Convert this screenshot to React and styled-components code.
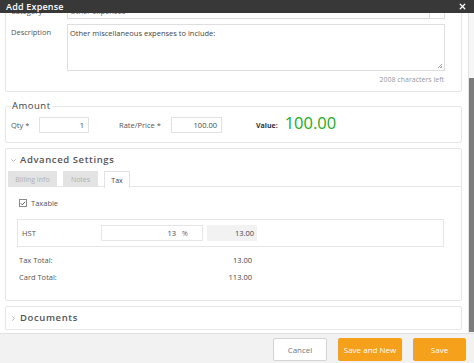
import React from 'react';
import styled, { createGlobalStyle } from 'styled-components';
import { ChevronDown, ChevronRight, X, Check } from 'lucide-react';

const GlobalStyle = createGlobalStyle`
  html, body { margin: 0; padding: 0; background: #fff; }
  body { font-family: "Open Sans", "Noto Sans", sans-serif; color: #555; }
  * { box-sizing: border-box; }
`;

const Modal = styled.div`
  width: 474px;
  height: 363px;
  display: flex;
  flex-direction: column;
  overflow: hidden;
  background: #fff;
`;

const Header = styled.div`
  height: 13px;
  flex: none;
  background: #383838;
  color: #fff;
  display: flex;
  align-items: center;
  justify-content: space-between;
  padding: 0 7px 0 6px;
  position: relative;
  z-index: 1;
`;

const Title = styled.span`
  font-size: 9px;
  font-weight: 600;
  letter-spacing: 0.2px;
  line-height: 13px;
`;

const Body = styled.div`
  flex: 1;
  display: flex;
  min-height: 0;
  overflow: hidden;
`;

const Scroller = styled.div`
  flex: 1;
  overflow: hidden;
`;

const Content = styled.div`
  margin-top: -16px;
  padding: 0 6px 0 5px;
  display: flex;
  flex-direction: column;
  gap: 5px;
`;

const ScrollTrack = styled.div`
  width: 6px;
  flex: none;
  background: #f6f6f6;
  border-left: 1px solid #e4e4e4;
  padding-top: 65px;
`;

const Thumb = styled.div`
  height: 254px;
  background: #7d7d7d;
`;

const Card = styled.div`
  border: 1px solid #e6e6e6;
  border-radius: 2px;
  padding: ${(p) => p.$pad || '0'};
  margin-top: ${(p) => p.$mt || '0'};
`;

const FormRow = styled.div`
  display: flex;
  align-items: ${(p) => p.$align || 'center'};
  margin-top: ${(p) => p.$mt || '0'};
`;

const Label = styled.span`
  font-size: 7.5px;
  color: #555;
  width: ${(p) => p.$w || 'auto'};
  flex: none;
  line-height: 12px;
  padding-top: ${(p) => p.$pt || '0'};
`;

const Select = styled.div`
  flex: 1;
  height: 16px;
  border: 1px solid #dedede;
  display: flex;
  align-items: center;
  font-size: 7.5px;
  color: #666;
  padding-left: 2px;
  & > span:first-child { flex: 1; }
`;

const SelectArrow = styled.span`
  width: 15px;
  height: 100%;
  border-left: 1px solid #dedede;
`;

const TextArea = styled.div`
  flex: 1;
  height: 47px;
  border: 1px solid #dedede;
  font-size: 7.5px;
  color: #444;
  padding: 3px 2px;
  position: relative;
`;

const Grip = styled.span`
  position: absolute;
  right: 2px;
  bottom: 2px;
  width: 4px;
  height: 4px;
  background: linear-gradient(135deg, transparent 45%, #aaa 45%, #aaa 60%, transparent 60%, transparent 75%, #aaa 75%);
`;

const Counter = styled.div`
  text-align: right;
  font-size: 7px;
  color: #999;
  line-height: 10px;
  margin-top: 4px;
  padding-right: 1px;
`;

const Fieldset = styled.fieldset`
  margin: 3px 0 0;
  border: 1px solid #e6e6e6;
  border-radius: 2px;
  padding: 0 4px 7px 5px;
`;

const Legend = styled.legend`
  font-size: 9.5px;
  letter-spacing: 0.5px;
  color: #444;
  line-height: 12px;
  padding: 0 1px;
`;

const Input = styled.div`
  width: ${(p) => p.$w};
  height: 16px;
  border: 1px solid #e2e2e2;
  font-size: 7.5px;
  color: #444;
  display: flex;
  align-items: center;
  justify-content: flex-end;
  padding-right: 4px;
  flex: none;
`;

const ValueLabel = styled.span`
  font-size: 7px;
  font-weight: 700;
  color: #333;
  margin-left: 34px;
  margin-right: 7px;
`;

const BigValue = styled.span`
  font-family: "Open Sans", sans-serif;
  font-size: 16.5px;
  color: #22aa22;
  line-height: 16px;
  margin-bottom: 4px;
`;

const SectionTitle = styled.div`
  display: flex;
  align-items: center;
  gap: 3px;
  font-size: 9.5px;
  font-weight: 600;
  letter-spacing: 0.6px;
  color: #555;
  line-height: 12px;
  margin-left: ${(p) => p.$ml || '0'};
  svg { color: #777; }
`;

const Tabs = styled.div`
  display: flex;
  gap: 6px;
  margin-top: 5px;
  margin-right: -9px;
  border-bottom: 1px solid #e6e6e6;
  height: 16px;
`;

const Tab = styled.div`
  height: ${(p) => (p.$active ? '17px' : '16px')};
  width: ${(p) => p.$w};
  font-size: 7px;
  display: flex;
  align-items: center;
  justify-content: center;
  background: ${(p) => (p.$active ? '#fff' : '#e3e3e3')};
  color: ${(p) => (p.$active ? '#444' : '#b0b0b0')};
  border: ${(p) => (p.$active ? '1px solid #e2e2e2' : 'none')};
  border-bottom: none;
  border-radius: 1px 1px 0 0;
`;

const Panel = styled.div`
  padding: 0 0 17px 11px;
`;

const CheckRow = styled.label`
  display: flex;
  align-items: center;
  gap: 4px;
  margin-top: 12px;
  font-size: 7.5px;
  color: #555;
  line-height: 8px;
`;

const CheckBox = styled.span`
  width: 8px;
  height: 8px;
  border: 1px solid #8a8a8a;
  display: flex;
  align-items: center;
  justify-content: center;
  color: #222;
`;

const TaxBox = styled.div`
  margin: 12px 0 0 -2px;
  width: 427px;
  height: 28px;
  border: 1px solid #e6e6e6;
  padding: 0 4px;
  display: flex;
  align-items: center;
`;

const InputGroup = styled.div`
  width: 102px;
  height: 16px;
  border: 1px solid #e6e6e6;
  display: flex;
  align-items: center;
  font-size: 7.5px;
  color: #444;
`;

const GroupValue = styled.span`
  width: 74px;
  text-align: right;
`;

const Addon = styled.span`
  margin-left: 6px;
  font-size: 7px;
  color: #666;
`;

const ReadOnly = styled.div`
  width: 50px;
  height: 16px;
  margin-left: 4px;
  background: #f2f2f2;
  font-size: 7.5px;
  color: #444;
  display: flex;
  align-items: center;
  justify-content: flex-end;
  padding-right: 3px;
`;

const TotalRow = styled.div`
  display: flex;
  font-size: 7.5px;
  color: #555;
  line-height: 12px;
  margin-top: ${(p) => p.$mt};
`;

const TotalLabel = styled.span`
  width: 180px;
`;

const TotalValue = styled.span`
  width: 53px;
  text-align: right;
  color: #444;
`;

const Footer = styled.div`
  height: 30px;
  flex: none;
  background: #f2f2f2;
  border-top: 1px solid #e2e2e2;
  display: flex;
  align-items: center;
  justify-content: flex-end;
  gap: 11px;
  padding: 0 8px 0 0;
`;

const Button = styled.button`
  width: ${(p) => p.$w};
  height: 23px;
  border-radius: 2px;
  font-family: "Open Sans", sans-serif;
  font-size: 8px;
  padding: 0;
  border: 1px solid ${(p) => (p.$primary ? '#f5a11c' : '#d4d4d4')};
  background: ${(p) => (p.$primary ? '#f5a11c' : '#fff')};
  color: ${(p) => (p.$primary ? '#fff' : '#777')};
  margin-top: 2px;
`;

export default function App() {
  return (
    <>
      <GlobalStyle />
      <Modal>
        <Header>
          <Title>Add Expense</Title>
          <X size={9} strokeWidth={3.5} color="#fff" />
        </Header>
        <Body>
          <Scroller>
            <Content>
              <Card $pad="5px 16px 6px 5px">
                <FormRow>
                  <Label $w="56px">Category</Label>
                  <Select>
                    <span>Other expenses</span>
                    <SelectArrow />
                  </Select>
                </FormRow>
                <FormRow $align="flex-start" $mt="5px">
                  <Label $w="56px" $pt="2px">Description</Label>
                  <TextArea>
                    Other miscellaneous expenses to include:
                    <Grip />
                  </TextArea>
                </FormRow>
                <Counter>2008 characters left</Counter>
              </Card>

              <Fieldset>
                <Legend>Amount</Legend>
                <FormRow $mt="3px">
                  <Label $w="28px">Qty *</Label>
                  <Input $w="50px">1</Input>
                  <Label $w="52px" style={{ marginLeft: 30 }}>Rate/Price *</Label>
                  <Input $w="51px">100.00</Input>
                  <ValueLabel>Value:</ValueLabel>
                  <BigValue>100.00</BigValue>
                </FormRow>
              </Fieldset>

              <Card $pad="5px 8px 0 2px">
                <SectionTitle $ml="2px">
                  <ChevronDown size={7} strokeWidth={2} />
                  Advanced Settings
                </SectionTitle>
                <Tabs>
                  <Tab $w="49px">Billing Info</Tab>
                  <Tab $w="35px">Notes</Tab>
                  <Tab $w="26px" $active>Tax</Tab>
                </Tabs>
                <Panel>
                  <CheckRow>
                    <CheckBox>
                      <Check size={7} strokeWidth={3} />
                    </CheckBox>
                    Taxable
                  </CheckRow>
                  <TaxBox>
                    <Label $w="79px">HST</Label>
                    <InputGroup>
                      <GroupValue>13</GroupValue>
                      <Addon>%</Addon>
                    </InputGroup>
                    <ReadOnly>13.00</ReadOnly>
                  </TaxBox>
                  <TotalRow $mt="7px">
                    <TotalLabel>Tax Total:</TotalLabel>
                    <TotalValue>13.00</TotalValue>
                  </TotalRow>
                  <TotalRow $mt="5px">
                    <TotalLabel>Card Total:</TotalLabel>
                    <TotalValue>113.00</TotalValue>
                  </TotalRow>
                </Panel>
              </Card>

              <Card $pad="5px 8px 5px 4px">
                <SectionTitle>
                  <ChevronRight size={7} strokeWidth={2} />
                  Documents
                </SectionTitle>
              </Card>
            </Content>
          </Scroller>
          <ScrollTrack>
            <Thumb />
          </ScrollTrack>
        </Body>
        <Footer>
          <Button $w="54px">Cancel</Button>
          <Button $w="64px" $primary>Save and New</Button>
          <Button $w="53px" $primary>Save</Button>
        </Footer>
      </Modal>
    </>
  );
}
